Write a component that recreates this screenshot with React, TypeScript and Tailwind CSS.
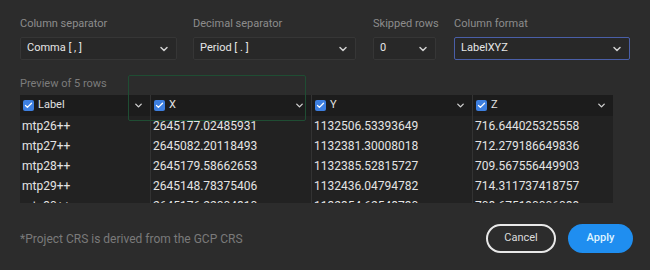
import React from "react";
import { ChevronDown, Check } from "lucide-react";

const rows = [
  ["mtp26++", "2645177.02485931", "1132506.53393649", "716.644025325558"],
  ["mtp27++", "2645082.20118493", "1132381.30008018", "712.279186649836"],
  ["mtp28++", "2645179.58662653", "1132385.52815727", "709.567556449903"],
  ["mtp29++", "2645148.78375406", "1132436.04794782", "714.311737418757"],
  ["mtp30++", "2645176.22004810", "1132354.62548730", "708.675190006089"],
];

const columns = [
  { name: "Label", width: "w-[131px]" },
  { name: "X", width: "w-[161px]" },
  { name: "Y", width: "w-[161px]" },
  { name: "Z", width: "flex-1" },
];

function Field({
  label,
  value,
  width,
  active,
}: {
  label: string;
  value: string;
  width: string;
  active?: boolean;
}) {
  return (
    <div className={`flex flex-col ${width}`}>
      <span className="text-[11px] leading-[14px] text-[#8c8c8c] mb-[6px] whitespace-nowrap">{label}</span>
      <div
        className={`h-[23px] flex items-center justify-between pl-[6px] pr-[6px] rounded-[2px] bg-[#282828] border ${
          active ? "border-[#4a5fa8]" : "border-[#363636]"
        }`}
      >
        <span className="text-[11px] text-[#e6e6e6]">{value}</span>
        <ChevronDown className="w-[12px] h-[12px] text-[#d0d0d0]" strokeWidth={3} />
      </div>
    </div>
  );
}

function Box() {
  return (
    <span className="w-[11px] h-[11px] rounded-[2px] bg-[#3d7fe0] flex items-center justify-center">
      <Check className="w-[9px] h-[9px] text-white" strokeWidth={3.5} />
    </span>
  );
}

export default function App() {
  return (
    <div
      className="w-[650px] h-[270px] bg-[#2c2c2c] relative overflow-hidden"
      style={{ fontFamily: "Roboto, 'Liberation Sans', sans-serif" }}
    >
      <div className="pt-[17px] px-[20px] flex">
        <Field label="Column separator" value="Comma [ , ]" width="w-[158px]" />
        <div className="w-[16px] shrink-0" />
        <Field label="Decimal separator" value="Period [ . ]" width="w-[164px]" />
        <div className="w-[17px] shrink-0" />
        <Field label="Skipped rows" value="0" width="w-[63px]" />
        <div className="w-[18px] shrink-0" />
        <Field label="Column format" value="LabelXYZ" width="w-[177px]" active />
      </div>

      <div className="px-[20px] mt-[17px] w-[633px]">
        <div className="text-[11px] leading-[14px] text-[#7c7c7c] mb-[4px]">Preview of 5 rows</div>
        <div className="h-[108px] overflow-hidden bg-[#222222]">
          <div className="flex h-[21px] bg-[#1c1c1c]">
            {columns.map((c, i) => (
              <div
                key={c.name}
                className={`${c.width} flex items-center gap-[4px] pl-[3px] pr-[6px] ${
                  i < 3 ? "border-r border-[#333333]" : ""
                }`}
              >
                <Box />
                <span className="text-[11px] text-[#e0e0e0] flex-1">{c.name}</span>
                <ChevronDown className="w-[11px] h-[11px] text-[#cfcfcf]" strokeWidth={3} />
              </div>
            ))}
          </div>
          {rows.map((r) => (
            <div key={r[0]} className="flex h-[20px]">
              {r.map((v, i) => (
                <div
                  key={i}
                  className={`${columns[i].width} flex items-center pl-[2px] text-[12px] text-[#e4e4e4] ${
                    i < 3 ? "border-r border-[#333333]" : ""
                  }`}
                >
                  {v}
                </div>
              ))}
            </div>
          ))}
        </div>
      </div>

      <div className="flex items-center px-[17px] mt-[21px]">
        <span className="text-[12px] text-[#7a7a7a] flex-1 pl-[3px]">*Project CRS is derived from the GCP CRS</span>
        <button className="h-[29px] w-[70px] rounded-full border-2 border-[#e8e8e8] text-[11px] text-[#dcdcdc] mr-[12px]">
          Cancel
        </button>
        <button className="h-[29px] w-[65px] rounded-full bg-[#1f8ef0] text-[11px] text-[#dff4ff] font-medium">
          Apply
        </button>
      </div>

      <div className="absolute left-[128px] top-[75px] w-[178px] h-[46px] border border-[#1f4d33] rounded-[2px] pointer-events-none" />
    </div>
  );
}
